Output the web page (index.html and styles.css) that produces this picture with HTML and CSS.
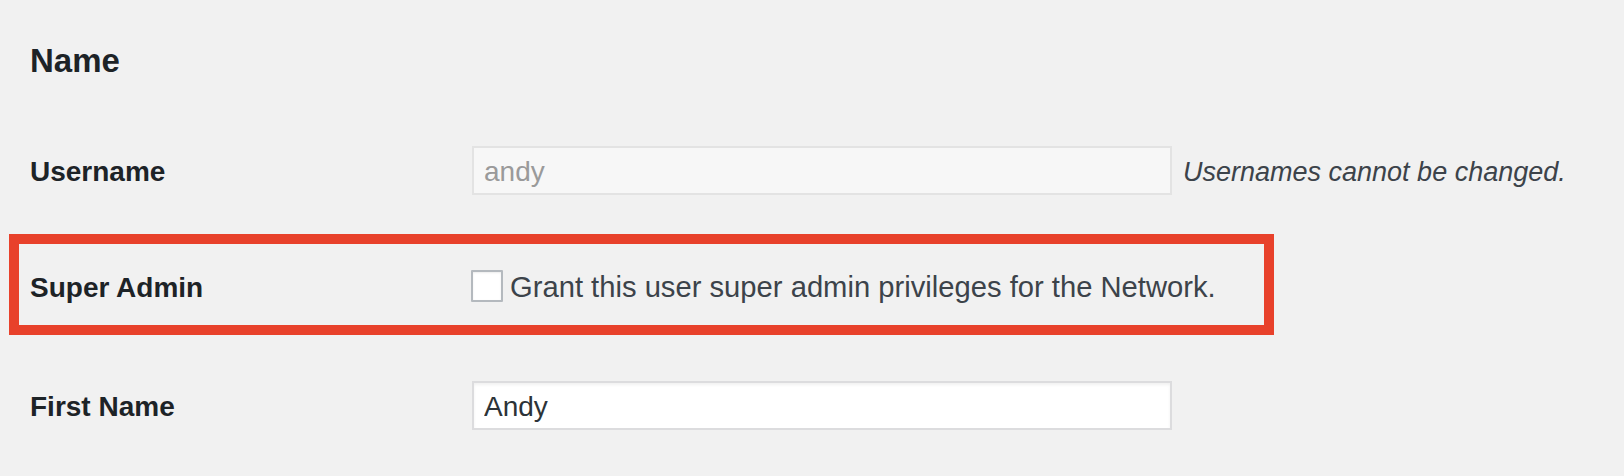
FILE: index.html
```html
<!DOCTYPE html>
<html lang="en">
<head>
<meta charset="utf-8">
<title>Name</title>
<link rel="stylesheet" href="styles.css">
</head>
<body>
<div class="wrap">
  <h2 class="section-title">Name</h2>
  <div class="form">
    <div class="row row-username">
      <label class="label" for="user_login">Username</label>
      <div class="field">
        <input class="text-input is-disabled" id="user_login" type="text" value="andy" disabled>
        <span class="description">Usernames cannot be changed.</span>
      </div>
    </div>
    <div class="row row-super">
      <div class="highlight"></div>
      <span class="label label-top">Super Admin</span>
      <label class="check-field">
        <input class="checkbox" type="checkbox">
        <span class="check-text">Grant this user super admin privileges for the Network.</span>
      </label>
    </div>
    <div class="row row-first">
      <label class="label" for="first_name">First Name</label>
      <div class="field">
        <input class="text-input" id="first_name" type="text" value="Andy">
      </div>
    </div>
  </div>
</div>
</body>
</html>
```
FILE: styles.css
```css
* { box-sizing: border-box; }

html, body {
  margin: 0;
  padding: 0;
  background: #f1f1f1;
}

body {
  font-family: "Liberation Sans", Arial, sans-serif;
  color: #1d2327;
  width: 1624px;
  height: 476px;
  overflow: hidden;
}

.wrap {
  padding-left: 30px;
  padding-top: 41px;
}

.section-title {
  margin: 0;
  font-size: 33px;
  line-height: 40px;
  font-weight: 700;
  color: #1d2327;
}

.form {
  display: flex;
  flex-direction: column;
}

.row {
  display: flex;
  align-items: baseline;
}

.row-username { margin-top: 65px; }

.row-super {
  position: relative;
  align-items: flex-start;
  margin-top: 75px;
}

.row-first { margin-top: 77px; }

.label {
  width: 442px;
  flex: none;
  font-size: 28px;
  font-weight: 700;
  color: #1d2327;
}

.label-top {
  line-height: 32px;
  padding-top: 2px;
}

.field {
  display: flex;
  align-items: baseline;
}

.text-input {
  width: 700px;
  height: 49px;
  margin: 0;
  padding: 3px 10px 0 10px;
  border: 2px solid #dcdcde;
  border-radius: 0;
  background: #fff;
  font-family: "Liberation Sans", Arial, sans-serif;
  font-size: 28px;
  color: #2c3338;
  box-shadow: inset 0 2px 3px rgba(0, 0, 0, 0.06);
  outline: none;
}

.text-input.is-disabled {
  background: #f7f7f7;
  border-color: #e3e3e3;
  color: #9a9a9a;
  box-shadow: none;
  -webkit-text-fill-color: #9a9a9a;
  opacity: 1;
}

.description {
  margin-left: 11px;
  font-size: 27px;
  font-style: italic;
  color: #3c434a;
}

.check-field {
  display: flex;
  align-items: flex-start;
  gap: 7px;
}

.checkbox {
  -webkit-appearance: none;
  appearance: none;
  width: 32px;
  height: 32px;
  margin: 0 0 0 -1px;
  border: 2px solid #b4b9be;
  border-radius: 1px;
  background: #fff;
  box-shadow: inset 0 1px 2px rgba(0, 0, 0, 0.08);
  flex: none;
}

.check-text {
  font-size: 29.2px;
  line-height: 32px;
  padding-top: 1px;
  color: #3c434a;
  white-space: nowrap;
}

.highlight {
  position: absolute;
  left: -21px;
  top: -36px;
  width: 1265px;
  height: 101px;
  border: 10px solid #e8412b;
  pointer-events: none;
}
```
